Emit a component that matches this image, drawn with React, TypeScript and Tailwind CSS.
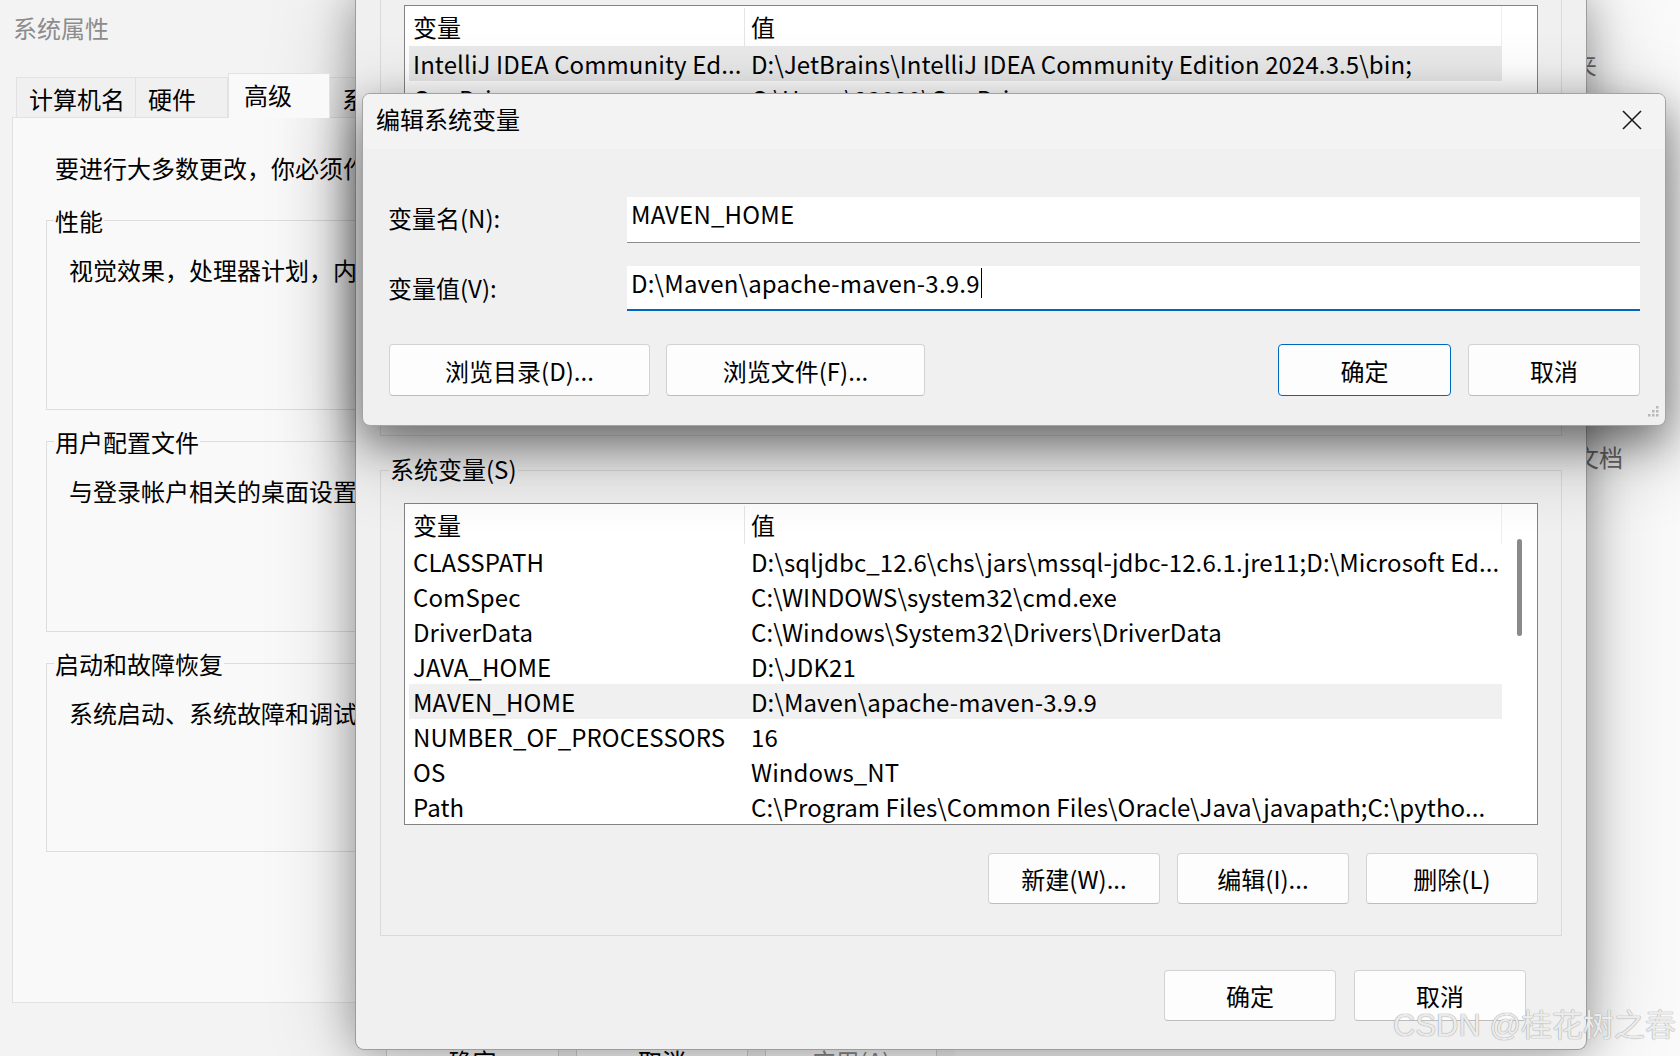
import React from "react";

const userRows: [string, string][] = [
  ["IntelliJ IDEA Community Ed...", "D:\\JetBrains\\IntelliJ IDEA Community Edition 2024.3.5\\bin;"],
  ["OneDrive", "C:\\Users\\23020\\OneDrive"],
  ["Path", "C:\\Users\\23020\\AppData\\Local\\Microsoft\\WindowsApps;"],
  ["TEMP", "C:\\Users\\23020\\AppData\\Local\\Temp"],
  ["TMP", "C:\\Users\\23020\\AppData\\Local\\Temp"],
];

const sysRows: [string, string][] = [
  ["CLASSPATH", "D:\\sqljdbc_12.6\\chs\\jars\\mssql-jdbc-12.6.1.jre11;D:\\Microsoft Ed..."],
  ["ComSpec", "C:\\WINDOWS\\system32\\cmd.exe"],
  ["DriverData", "C:\\Windows\\System32\\Drivers\\DriverData"],
  ["JAVA_HOME", "D:\\JDK21"],
  ["MAVEN_HOME", "D:\\Maven\\apache-maven-3.9.9"],
  ["NUMBER_OF_PROCESSORS", "16"],
  ["OS", "Windows_NT"],
  ["Path", "C:\\Program Files\\Common Files\\Oracle\\Java\\javapath;C:\\pytho..."],
];

function Btn({
  children,
  w,
  h = "h-[51px]",
  primary,
  dim,
}: {
  children: React.ReactNode;
  w: string;
  h?: string;
  primary?: boolean;
  dim?: boolean;
}) {
  return (
    <div
      className={`${w} ${h} flex shrink-0 items-center justify-center rounded-[4px] border bg-[#fdfdfd] ${
        primary ? "border-[#0067c0]" : "border-[#d3d3d3] border-b-[#bdbdbd]"
      } ${dim ? "text-[#8a8a8a]" : "text-black"}`}
    >
      {children}
    </div>
  );
}

function VarList({
  rows,
  selected,
  selBg,
  className,
  thumb,
}: {
  rows: [string, string][];
  selected: number;
  selBg: string;
  className: string;
  thumb?: boolean;
}) {
  return (
    <div className={`flex flex-col overflow-hidden border border-[#838383] bg-white ${className}`}>
      <div className="flex h-[40px] shrink-0">
        <div className="flex w-[339px] shrink-0 items-start pl-[8px] pt-[3px]">变量</div>
        <div className="mt-[2px] w-px bg-[#e5e5e5]" />
        <div className="flex w-[757px] items-start border-r border-[#eeeeee] pl-[6px] pt-[3px]">值</div>
      </div>
      <div className="flex">
        <div className="flex w-[1097px] flex-col pl-[4px] tracking-[0.1px]">
          {rows.map(([k, v], i) => (
            <div
              key={k + i}
              className={`flex h-[35px] shrink-0 whitespace-nowrap ${i === selected ? selBg : ""}`}
            >
              <div className="w-[335px] shrink-0 overflow-hidden pl-[4px]">{k}</div>
              <div className="flex-1 overflow-hidden pl-[7px]">{v}</div>
            </div>
          ))}
        </div>
        <div className="relative flex-1">
          {thumb && (
            <div className="absolute left-[15px] top-[-5px] h-[97px] w-[5px] rounded-full bg-[#8a8a8a]" />
          )}
        </div>
      </div>
    </div>
  );
}

function Group({
  title,
  text,
  className,
}: {
  title: string;
  text: string;
  className: string;
}) {
  return (
    <fieldset className={`ml-[33px] w-[880px] border border-[#dddddd] ${className}`}>
      <legend className="ml-[7px] px-[1px]">{title}</legend>
      <div className="whitespace-nowrap pl-[22px] pt-[14px]">{text}</div>
    </fieldset>
  );
}

export default function App() {
  return (
    <div className="relative h-[1056px] w-[1680px] overflow-hidden bg-[#fafafa] text-[24px] leading-[35px] text-black [font-family:'Noto_Sans_CJK_SC','Noto_Sans',sans-serif]">
      {/* window behind on the right */}
      <div className="absolute left-[1400px] top-0 h-[1056px] w-[280px] bg-[#fafafa] text-[#707070]">
        <div className="absolute left-[173px] top-[46px]">夹</div>
        <div className="absolute left-[175px] top-[439px]">文档</div>
      </div>

      {/* 系统属性 */}
      <div className="absolute left-0 top-0 flex h-[1100px] w-[955px] flex-col bg-[#f3f3f3]">
        <div className="flex h-[55px] items-center pl-[13px] text-[#8c8c8c]">系统属性</div>
        <div className="mt-[18px] flex h-[44px] items-end pl-[16px]">
          <div className="h-[40px] w-[120px] border border-b-0 border-[#e2e2e2] bg-[#f0f0f0] pl-[12px] leading-[42px]">计算机名</div>
          <div className="h-[40px] w-[92px] border-r border-t border-[#e2e2e2] bg-[#f0f0f0] pl-[12px] leading-[42px]">硬件</div>
          <div className="relative z-10 -mb-px h-[45px] w-[102px] border-x border-t border-[#e2e2e2] bg-[#f9f9f9] pl-[15px] leading-[42px]">高级</div>
          <div className="h-[40px] w-[130px] border-r border-t border-[#e2e2e2] bg-[#f0f0f0] pl-[12px] leading-[42px]">系统保护</div>
        </div>
        <div className="ml-[12px] flex h-[886px] w-[930px] flex-col border border-[#e2e2e2] bg-[#f9f9f9]">
          <div className="whitespace-nowrap pl-[42px] pt-[32px]">要进行大多数更改，你必须作为管理员登录。</div>
          <Group className="mt-[18px] h-[207px]" title="性能" text="视觉效果，处理器计划，内存使用，以及虚拟内存" />
          <Group className="mt-[14px] h-[208px]" title="用户配置文件" text="与登录帐户相关的桌面设置" />
          <Group className="mt-[14px] h-[206px]" title="启动和故障恢复" text="系统启动、系统故障和调试信息" />
        </div>
        <div className="mt-[32px] flex justify-end gap-[17px] pr-[18px]">
          <Btn w="w-[173px]">确定</Btn>
          <Btn w="w-[172px]">取消</Btn>
          <Btn w="w-[172px]" dim>
            应用(A)
          </Btn>
        </div>
      </div>

      {/* 环境变量 */}
      <div className="absolute left-[355px] top-0 flex h-[1050px] w-[1232px] flex-col rounded-b-[9px] border-x border-b border-[#9c9c9c] bg-[#f0f0f0] px-[24px] shadow-[0_0_40px_rgba(0,0,0,0.3),0_0_90px_rgba(0,0,0,0.22)]">
        <div className="h-[436px] shrink-0 border-x border-b border-[#dadada]">
          <VarList rows={userRows} selected={0} selBg="bg-[#e9e9e9]" className="mx-[23px] mt-[5px] h-[300px]" />
        </div>
        <fieldset className="mt-[17px] h-[483px] shrink-0 border border-[#dadada]">
          <legend className="relative -top-[2px] ml-[8px] px-[1px]">系统变量(S)</legend>
          <div className="flex flex-col px-[23px]">
            <VarList rows={sysRows} selected={4} selBg="bg-[#f0f0f0]" className="mt-[15px] h-[322px]" thumb />
            <div className="mt-[28px] flex justify-end gap-[17px]">
              <Btn w="w-[172px]">新建(W)...</Btn>
              <Btn w="w-[172px]">编辑(I)...</Btn>
              <Btn w="w-[172px]">删除(L)</Btn>
            </div>
          </div>
        </fieldset>
        <div className="mt-[34px] flex justify-end gap-[18px] pr-[36px]">
          <Btn w="w-[172px]">确定</Btn>
          <Btn w="w-[172px]">取消</Btn>
        </div>
      </div>

      {/* 编辑系统变量 */}
      <div className="absolute left-[362px] top-[93px] flex h-[333px] w-[1304px] flex-col overflow-hidden rounded-[8px] border border-[#a3a3a3] bg-[#f0f0f0] shadow-[0_16px_40px_rgba(0,0,0,0.4),0_24px_80px_rgba(0,0,0,0.3)]">
        <div className="flex h-[55px] shrink-0 items-center justify-between bg-[#f3f3f3] pb-[6px] pl-[13px] pr-[23px]">
          <span>编辑系统变量</span>
          <svg width="20" height="20" viewBox="0 0 20 20" className="mt-[2px]">
            <path d="M1 1 L19 19 M19 1 L1 19" stroke="#1b1b1b" strokeWidth="1.6" />
          </svg>
        </div>
        <div className="flex flex-col px-[25px] pt-[48px]">
          <div className="flex h-[46px] items-center">
            <div className="w-[239px] shrink-0 pb-[6px]">变量名(N):</div>
            <div className="h-[46px] flex-1 border-b border-[#8c8c8c] bg-white pl-[4px] pt-[1px] leading-[31px] tracking-[0.2px]">MAVEN_HOME</div>
          </div>
          <div className="mt-[23px] flex h-[45px] items-center">
            <div className="w-[239px] shrink-0 pb-[3px]">变量值(V):</div>
            <div className="flex h-[45px] flex-1 items-start border-b-2 border-[#0067c0] bg-white pl-[4px] pt-[1px] leading-[31px] tracking-[0.2px]">
              <span>D:\Maven\apache-maven-3.9.9</span>
              <span className="ml-[1px] mt-[1px] h-[30px] w-[1.5px] bg-black" />
            </div>
          </div>
          <div className="mt-[33px] flex items-center">
            <div className="ml-[1px] flex gap-[16px]">
              <Btn w="w-[261px]" h="h-[52px]">浏览目录(D)...</Btn>
              <Btn w="w-[259px]" h="h-[52px]">浏览文件(F)...</Btn>
            </div>
            <div className="flex-1" />
            <div className="flex gap-[17px]">
              <Btn w="w-[173px]" h="h-[52px]" primary>
                确定
              </Btn>
              <Btn w="w-[172px]" h="h-[52px]">取消</Btn>
            </div>
          </div>
        </div>
        <svg width="16" height="16" viewBox="0 0 16 16" className="absolute bottom-[5px] right-[5px]">
          {[
            [12, 2],
            [8, 6],
            [12, 6],
            [4, 10],
            [8, 10],
            [12, 10],
          ].map(([x, y]) => (
            <rect key={`${x}-${y}`} x={x} y={y} width="2.5" height="2.5" fill="#b8b8b8" />
          ))}
        </svg>
      </div>

      {/* watermark */}
      <div className="absolute left-[1393px] top-[1006px] whitespace-nowrap text-[31px] leading-[40px] text-white/80 [font-family:'Liberation_Sans','Noto_Sans_CJK_SC',sans-serif] [text-shadow:0_0_1px_#9a9a9a,0_0_1px_#9a9a9a]">
        CSDN @桂花树之春
      </div>
    </div>
  );
}
